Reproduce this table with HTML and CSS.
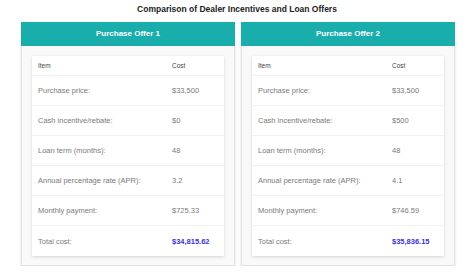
FILE: index.html
```html
<!DOCTYPE html>
<html>
<head>
<meta charset="utf-8">
<link rel="stylesheet" href="styles.css">
</head>
<body>
<h1 class="title">Comparison of Dealer Incentives and Loan Offers</h1>
<div class="offers">
  <section class="card">
    <div class="card-head">Purchase Offer 1</div>
    <div class="card-body">
      <table class="tbl">
        <thead><tr><th>Item</th><th>Cost</th></tr></thead>
        <tbody>
          <tr><td>Purchase price:</td><td>$33,500</td></tr>
          <tr><td>Cash incentive/rebate:</td><td>$0</td></tr>
          <tr><td>Loan term (months):</td><td>48</td></tr>
          <tr><td>Annual percentage rate (APR):</td><td>3.2</td></tr>
          <tr><td>Monthly payment:</td><td>$725.33</td></tr>
          <tr class="total"><td>Total cost:</td><td>$34,815.62</td></tr>
        </tbody>
      </table>
    </div>
  </section>
  <section class="card">
    <div class="card-head">Purchase Offer 2</div>
    <div class="card-body">
      <table class="tbl">
        <thead><tr><th>Item</th><th>Cost</th></tr></thead>
        <tbody>
          <tr><td>Purchase price:</td><td>$33,500</td></tr>
          <tr><td>Cash incentive/rebate:</td><td>$500</td></tr>
          <tr><td>Loan term (months):</td><td>48</td></tr>
          <tr><td>Annual percentage rate (APR):</td><td>4.1</td></tr>
          <tr><td>Monthly payment:</td><td>$746.59</td></tr>
          <tr class="total"><td>Total cost:</td><td>$35,836.15</td></tr>
        </tbody>
      </table>
    </div>
  </section>
</div>
</body>
</html>
```
FILE: styles.css
```css
html, body {
  margin: 0;
  padding: 0;
  background: #ffffff;
  font-family: "Liberation Sans", Arial, sans-serif;
}
.title {
  margin: 0;
  height: 20px;
  line-height: 19px;
  font-size: 8.5px;
  font-weight: bold;
  color: #222;
  text-align: center;
}
.offers {
  display: flex;
  gap: 6px;
  padding: 2px 18px 0 21px;
}
.card {
  width: 214px;
  height: 244px;
  box-sizing: border-box;
  border: 1px solid #e2e2e2;
  background: #f9f9f9;
  box-shadow: 0 1px 3px rgba(0,0,0,0.12);
}
.card-head {
  height: 24px;
  line-height: 24px;
  background: #19adac;
  color: #fff;
  font-size: 8px;
  font-weight: bold;
  text-align: center;
  margin: -1px -1px 0 -1px;
}
.card-body {
  padding: 10px 10px 0 10px;
}
.tbl {
  width: 100%;
  border-collapse: collapse;
  background: #fff;
  box-shadow: 0 1px 3px rgba(0,0,0,0.15);
}
.tbl th {
  height: 19px;
  padding: 0 0 0 6px;
  text-align: left;
  font-size: 6.5px;
  font-weight: normal;
  color: #444;
  border-bottom: 1px solid #f0f0f0;
}
.tbl th:first-child { width: 128px; }
.tbl td {
  height: 29px;
  padding: 0 0 0 6px;
  font-size: 7.5px;
  color: #7a7a7a;
  border-bottom: 1px solid #f0f0f0;
}
.tbl tr.total td {
  border-bottom: none;
  height: 30px;
}
.tbl tr.total td:last-child {
  color: #3a30e0;
  font-weight: bold;
}
```
